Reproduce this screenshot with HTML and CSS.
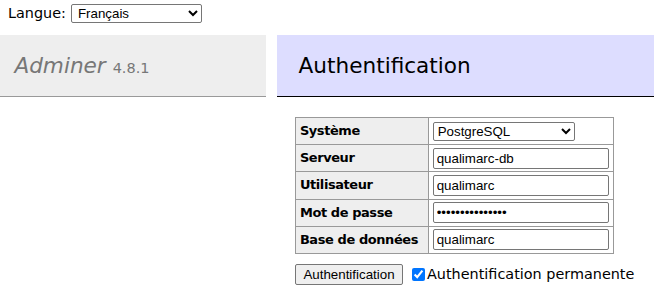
FILE: index.html
```html
<!DOCTYPE html>
<html lang="fr">
<head>
    <meta charset="UTF-8">
    <title>Authentification - Adminer</title>
    <link rel="stylesheet" href="styles.css">
</head>
<body>
    <form class="lang">
        <label for="langSelect">Langue:</label>
        <select id="langSelect" class="lang-select">
            <option>Français</option>
        </select>
    </form>
    <div class="layout">
        <div class="menu">
            <h1><a href="#" class="brand">Adminer</a> <span class="version">4.8.1</span></h1>
        </div>
        <div class="content">
            <h2>Authentification</h2>
            <form class="login">
                <table>
                    <tr>
                        <th>Système</th>
                        <td>
                            <select class="driver">
                                <option>PostgreSQL</option>
                            </select>
                        </td>
                    </tr>
                    <tr>
                        <th>Serveur</th>
                        <td><input type="text" value="qualimarc-db"></td>
                    </tr>
                    <tr>
                        <th>Utilisateur</th>
                        <td><input type="text" value="qualimarc"></td>
                    </tr>
                    <tr>
                        <th>Mot de passe</th>
                        <td><input type="password" value="qualimarc123456"></td>
                    </tr>
                    <tr>
                        <th>Base de données</th>
                        <td><input type="text" value="qualimarc"></td>
                    </tr>
                </table>
                <p class="actions">
                    <button type="submit" class="submit-btn">Authentification</button>
                    <label class="permanent"><input type="checkbox" checked>Authentification permanente</label>
                </p>
            </form>
        </div>
    </div>
</body>
</html>
```

FILE: styles.css
```css
body {
    margin: 0;
    color: #000;
    background: #fff;
    font: 14.4px/1.25 "DejaVu Sans", Verdana, sans-serif;
}
.lang {
    height: 35px;
    box-sizing: border-box;
    padding: 4px 8px 0;
    display: flex;
    align-items: flex-start;
    gap: 5px;
}
.lang label {
    line-height: 19px;
}
.lang-select {
    width: 131px;
    height: 19px;
    font: 13.33px "Liberation Sans", Arial, sans-serif;
    color: #000;
    border: 1px solid #767676;
    border-radius: 2px;
    background: #fff;
    padding: 0 0 0 2px;
}
.layout {
    display: flex;
    gap: 11px;
}
.menu {
    width: 266px;
}
h1 {
    margin: 0;
    font-size: 21.6px;
    height: 27px;
    line-height: 27px;
    font-weight: normal;
    padding: 17px 14.4px;
    background: #eee;
    border-bottom: 1px solid #999;
    color: #777;
}
.brand {
    color: #777;
    font-style: italic;
    text-decoration: none;
}
.version {
    font-size: 67%;
    line-height: 1;
    color: #777;
}
.content {
    width: 377px;
}
h2 {
    margin: 0;
    font-size: 21.6px;
    line-height: 27px;
    font-weight: normal;
    padding: 17px 21.6px;
    background: #ddf;
    border-bottom: 1px solid #000;
}
.login {
    padding-left: 18px;
}
table {
    margin-top: 20px;
    border-collapse: collapse;
    font-size: 12.96px;
}
th, td {
    border: 1px solid #999;
    padding: 2.6px 3.9px;
    height: 21px;
}
th {
    background: #eee;
    text-align: left;
    width: 124px;
    white-space: nowrap;
    letter-spacing: -0.4px;
}
input[type=text], input[type=password] {
    box-sizing: border-box;
    width: 176px;
    height: 21px;
    font: 13.33px "Liberation Sans", Arial, sans-serif;
    border: 1px solid #767676;
    border-radius: 2px;
    padding: 1px 3px;
    display: block;
}
.driver {
    display: block;
    width: 142px;
    height: 19px;
    font: 13.33px "Liberation Sans", Arial, sans-serif;
    border: 1px solid #767676;
    border-radius: 2px;
    background: #fff;
    color: #000;
}
.actions {
    margin: 10px 0 0;
    display: flex;
    align-items: center;
    gap: 9px;
}
.submit-btn {
    box-sizing: border-box;
    width: 108px;
    height: 21px;
    font: 13.33px "Liberation Sans", Arial, sans-serif;
    border: 1px solid #767676;
    border-radius: 2px;
    background: #efefef;
    padding: 1px 6px;
}
.permanent {
    display: flex;
    align-items: center;
}
.permanent input {
    margin: 0 2px 0 0;
    width: 13px;
    height: 13px;
}
```
